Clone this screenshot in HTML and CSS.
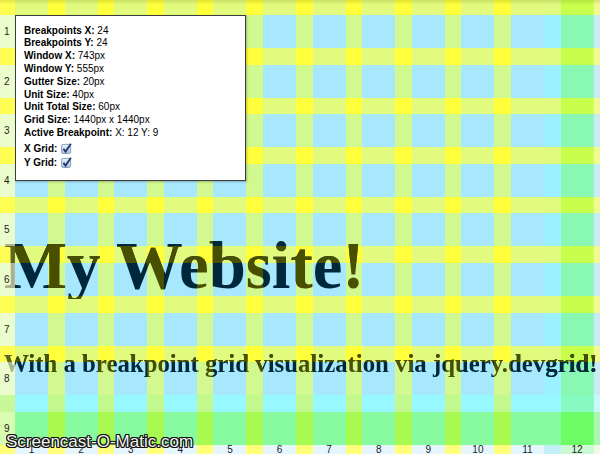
FILE: index.html
```html
<!DOCTYPE html>
<html lang="en">
<head>
    <meta charset="UTF-8">
    <title>My Website</title>
    <link rel="stylesheet" href="styles.css">
</head>
<body>
<div class="screen">
    <!-- devgrid backdrop: one band per gutter / unit row -->
    <div class="devgrid">
        <div class="band top"></div>
        <div class="band unit"></div><div class="band gut"></div>
        <div class="band unit"></div><div class="band gut"></div>
        <div class="band unit"></div><div class="band gut"></div>
        <div class="band unit"></div><div class="band gut"></div>
        <div class="band unit"></div><div class="band gut"></div>
        <div class="band unit"></div><div class="band gut"></div>
        <div class="band unit"></div><div class="band gut"></div>
        <div class="band unit"></div><div class="band gut hot"></div>
        <div class="band unit hot"></div><div class="band gut"></div>
    </div>

    <div class="site">
        <h1>My Website!</h1>
        <h2>With a breakpoint grid visualization via jquery.devgrid!</h2>
    </div>

    <div class="row-labels">
        <span class="rl top"></span>
        <span class="rl unit">1</span><span class="rl gut"></span>
        <span class="rl unit">2</span><span class="rl gut"></span>
        <span class="rl unit">3</span><span class="rl gut"></span>
        <span class="rl unit">4</span><span class="rl gut"></span>
        <span class="rl unit">5</span><span class="rl gut"></span>
        <span class="rl unit">6</span><span class="rl gut"></span>
        <span class="rl unit">7</span><span class="rl gut"></span>
        <span class="rl unit">8</span><span class="rl gut"></span>
        <span class="rl unit">9</span><span class="rl gut"></span>
    </div>

    <div class="col-labels">
        <span class="cl-gap first"></span>
        <span class="cl">1</span><span class="cl-gap"></span>
        <span class="cl">2</span><span class="cl-gap"></span>
        <span class="cl">3</span><span class="cl-gap"></span>
        <span class="cl">4</span><span class="cl-gap"></span>
        <span class="cl">5</span><span class="cl-gap"></span>
        <span class="cl">6</span><span class="cl-gap"></span>
        <span class="cl">7</span><span class="cl-gap"></span>
        <span class="cl">8</span><span class="cl-gap"></span>
        <span class="cl">9</span><span class="cl-gap"></span>
        <span class="cl">10</span><span class="cl-gap"></span>
        <span class="cl">11</span><span class="cl-gap hot"></span>
        <span class="cl hot">12</span><span class="cl-gap last"></span>
    </div>

    <div class="grid-info">
        <p><b>Breakpoints X:</b> 24</p>
        <p><b>Breakpoints Y:</b> 24</p>
        <p><b>Window X:</b> 743px</p>
        <p><b>Window Y:</b> 555px</p>
        <p><b>Gutter Size:</b> 20px</p>
        <p><b>Unit Size:</b> 40px</p>
        <p><b>Unit Total Size:</b> 60px</p>
        <p><b>Grid Size:</b> 1440px x 1440px</p>
        <p><b>Active Breakpoint:</b> X: 12 Y: 9</p>
        <p class="check-row first"><b>X Grid:</b> <svg class="check" viewBox="0 0 12 12"><defs><linearGradient id="cb" x1="0" y1="0" x2="0" y2="1"><stop offset="0" stop-color="#eef3f8"/><stop offset="1" stop-color="#a9c2dc"/></linearGradient></defs><rect x="0.5" y="1.5" width="10" height="10" rx="2" fill="url(#cb)" stroke="#7c98b8"/><path d="M2.6 6.4 L5 9.4 L10.8 0.8" fill="none" stroke="#1d3b6e" stroke-width="2"/></svg></p>
        <p class="check-row"><b>Y Grid:</b> <svg class="check" viewBox="0 0 12 12"><rect x="0.5" y="1.5" width="10" height="10" rx="2" fill="url(#cb)" stroke="#7c98b8"/><path d="M2.6 6.4 L5 9.4 L10.8 0.8" fill="none" stroke="#1d3b6e" stroke-width="2"/></svg></p>
    </div>

    <div class="watermark">Screencast-O-Matic.com</div>
</div>
</body>
</html>
```

FILE: styles.css
```css
*{margin:0; padding:0;}
body{background:#fff; font-family:"Liberation Sans", Arial, sans-serif;}

.screen{position:relative; width:600px; height:454px; overflow:hidden;}

/* ============ grid backdrop ============ */
.devgrid{position:absolute; top:0; left:0; right:0; bottom:0; display:flex; flex-direction:column; z-index:0;}
.band{flex:none;}
.band.unit{height:33.1px;
    background:
        linear-gradient(#c8ecf2, #c8ecf2) 593.7px 0 / 10px 100% no-repeat,
        linear-gradient(to right, #9cf0ff 0, #9cf0ff 16.5px, #88f8b2 16.5px) 544.1px 0 / 49.6px 100% no-repeat,
        repeating-linear-gradient(to right, #d2f890 -1.5px, #d2f890 15px, #a8e8fe 15px, #a8e8fe 48.1px);}
.band.gut{height:16.5px;
    background:
        linear-gradient(#f0fa90, #f0fa90) 593.7px 0 / 10px 100% no-repeat,
        linear-gradient(to right, #e0fa80 0, #e0fa80 16.5px, #c8ff4c 16.5px) 544.1px 0 / 49.6px 100% no-repeat,
        repeating-linear-gradient(to right, #ffff3c -1.5px, #ffff3c 15px, #e2fa7e 15px, #e2fa7e 48.1px);}
.band.top{height:15px;
    background:
        linear-gradient(rgba(90,110,0,.18), rgba(90,110,0,0) 5px),
        linear-gradient(#f0fa90, #f0fa90) 593.7px 0 / 10px 100% no-repeat,
        linear-gradient(to right, #e0fa80 0, #e0fa80 16.5px, #c8ff4c 16.5px) 544.1px 0 / 49.6px 100% no-repeat,
        repeating-linear-gradient(to right, #ffff3c -1.5px, #ffff3c 15px, #e2fa7e 15px, #e2fa7e 48.1px);}
.band.gut.hot{
    background:
        linear-gradient(#c8f8f8, #c8f8f8) 593.7px 0 / 10px 100% no-repeat,
        linear-gradient(to right, #98f8ff 0, #98f8ff 16.5px, #86fac0 16.5px) 544.1px 0 / 49.6px 100% no-repeat,
        repeating-linear-gradient(to right, #c2f88e -1.5px, #c2f88e 15px, #98f8ff 15px, #98f8ff 48.1px);}
.band.unit.hot{
    background:
        linear-gradient(#a8f8b0, #a8f8b0) 593.7px 0 / 10px 100% no-repeat,
        linear-gradient(to right, #88faa0 0, #88faa0 16.5px, #6cfe64 16.5px) 544.1px 0 / 49.6px 100% no-repeat,
        repeating-linear-gradient(to right, #a8fa50 -1.5px, #a8fa50 15px, #88faa0 15px, #88faa0 48.1px);}

/* ============ page content ============ */
.site{position:relative; z-index:1; padding:232.4px 0 0 4px;}
.site h1,
.site h2{font-family:"Liberation Serif", "Times New Roman", serif; font-weight:bold; line-height:1; white-space:nowrap; color:transparent;
    background:
        repeating-linear-gradient(to bottom, #485000 -1.5px, #485000 15px, transparent 15px, transparent 48.1px),
        linear-gradient(to right, transparent 544px, #00283c 544px),
        repeating-linear-gradient(to right, #485000 -1.5px, #485000 15px, #00283c 15px, #00283c 48.1px);
    background-attachment:fixed;
    -webkit-background-clip:text; background-clip:text;}
.site h1{font-size:66.8px;}
.site h2{font-size:24.8px; margin-top:53px;}

/* ============ row / column labels ============ */
.row-labels{position:absolute; top:0; left:0; width:15px; display:flex; flex-direction:column; z-index:2;}
.rl{display:flex; align-items:center; flex:none; padding-left:4px; font-size:10px; color:#1c1c1c;}
.rl.top{height:15px; background:rgba(255,255,255,.12);}
.rl.gut{height:16.5px; background:rgba(255,255,255,.12);}
.rl.unit{height:33.1px; background:rgba(255,255,255,.55);}

.col-labels{position:absolute; top:445px; left:0; width:620px; height:12px; display:flex; z-index:2;}
.cl, .cl-gap{flex:none; font-size:10px; line-height:10px; color:#1c1c1c; text-align:center;}
.cl{width:33.1px; background:#e6f6ff;}
.cl-gap{width:16.5px; background:#ffff7c;}
.cl-gap.first{width:15px;}
.cl-gap.hot{background:#c2f0f8;}
.cl.hot{background:#ccf8d4;}
.cl-gap.last{background:#f2f8e8;}

/* ============ devgrid info panel ============ */
.grid-info{position:absolute; left:15px; top:15px; width:231px; box-sizing:border-box; padding:8.6px 8px 10px 8px; border:1px solid #3c3c3c; background:#fff; box-shadow:1px 1px 2px rgba(0,0,0,.25); font-size:10px; line-height:12.8px; color:#000; z-index:3;}
.grid-info p{white-space:nowrap;}
.grid-info .check-row{height:14px; line-height:14px;}
.grid-info .check-row.first{margin-top:2px;}
.grid-info .check{display:inline-block; width:11px; height:11px; margin-left:1px; vertical-align:-2px;}

.watermark{position:absolute; left:6px; top:432.6px; z-index:4; white-space:nowrap; font-size:17px; line-height:1; color:#f2f2f2;
    text-shadow:1px 0 0 #111, -1px 0 0 #111, 0 1px 0 #111, 0 -1px 0 #111, 1px 1px 0 #111, -1px -1px 0 #111, 1px -1px 0 #111, -1px 1px 0 #111;}
```
